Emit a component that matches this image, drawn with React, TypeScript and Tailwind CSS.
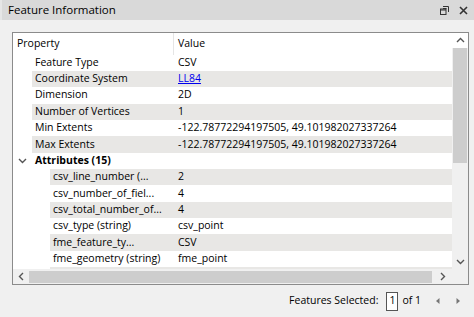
const top = [
  { k: "Feature Type", v: "CSV" },
  { k: "Coordinate System", v: "LL84", link: true },
  { k: "Dimension", v: "2D" },
  { k: "Number of Vertices", v: "1" },
  { k: "Min Extents", v: "-122.78772294197505, 49.101982027337264" },
  { k: "Max Extents", v: "-122.78772294197505, 49.101982027337264" },
];

const attrs = [
  { k: "csv_line_number (...", v: "2" },
  { k: "csv_number_of_fiel...", v: "4" },
  { k: "csv_total_number_of...", v: "4" },
  { k: "csv_type (string)", v: "csv_point" },
  { k: "fme_feature_ty...", v: "CSV" },
  { k: "fme_geometry (string)", v: "fme_point" },
  { k: "", v: "" },
];

type Item = { k: string; v: string; link?: boolean };

const Row = ({ item, indent, gray }: { item: Item; indent: number; gray: boolean }) => (
  <div className="flex h-[16.35px] shrink-0 items-center">
    <div style={{ width: indent }} className="h-full shrink-0" />
    <div className={`flex h-full flex-1 items-center ${gray ? "bg-[#e8e7e5]" : ""}`}>
      <div style={{ width: 161 - indent }} className="shrink-0 overflow-hidden whitespace-nowrap pl-[3px]">
        {item.k}
      </div>
      <div className="whitespace-nowrap pl-[4px]">
        {item.link ? <span className="text-[#0000ee] underline">{item.v}</span> : item.v}
      </div>
    </div>
  </div>
);

const Chevron = ({ d, className }: { d: string; className?: string }) => (
  <svg width="9" height="9" viewBox="0 0 9 9" className={className}>
    <path d={d} fill="none" stroke="#555" strokeWidth="1.4" />
  </svg>
);

export default function App() {
  return (
    <div className="relative flex h-[317px] w-[474px] flex-col overflow-hidden bg-[#f0f0f0] font-['Open_Sans',sans-serif] text-[10.5px] text-black">
      {/* Title bar */}
      <div className="flex h-[20px] shrink-0 items-center border-l-2 border-[#e6e6e6] bg-[#d9d9d9] pl-[6px] pr-[6px]">
        <span className="text-[11.5px]">Feature Information</span>
        <div className="ml-auto flex items-center gap-[10px]">
          <svg width="9" height="9" viewBox="0 0 9 9">
            <path d="M3 0.5h5.5v5.5M3 2.5h3.5v0" fill="none" stroke="#333" strokeWidth="1" />
            <rect x="0.5" y="3" width="5.5" height="5.5" fill="none" stroke="#333" strokeWidth="1" />
            <path d="M0.5 4h5.5" stroke="#333" strokeWidth="1" />
          </svg>
          <svg width="9" height="9" viewBox="0 0 9 9">
            <path d="M1 1l7 7M8 1l-7 7" stroke="#333" strokeWidth="1.6" />
          </svg>
        </div>
      </div>

      {/* Table */}
      <div className="ml-[12px] mr-[5px] mt-[12px] flex h-[253px] shrink-0 flex-col border border-[#8b8b8b] bg-white">
        <div className="flex min-h-0 flex-1">
          <div className="flex min-w-0 flex-1 flex-col overflow-hidden">
            <div className="flex h-[21.5px] shrink-0 items-center">
              <div className="h-full w-[161px] shrink-0 border-r border-[#e5e5e5] pl-[4px] leading-[21.5px]">Property</div>
              <div className="pl-[4px]">Value</div>
            </div>
            {top.map((it, i) => (
              <Row key={it.k} item={it} indent={19} gray={i % 2 === 1} />
            ))}
            <div className="flex h-[16.35px] shrink-0 items-center">
              <Chevron d="M1 3l3.5 3.5L8 3" className="ml-[5px] mr-[8px]" />
              <span className="font-bold">Attributes (15)</span>
            </div>
            {attrs.map((it, i) => (
              <Row key={i} item={it} indent={37} gray={i % 2 === 0} />
            ))}
          </div>
          {/* Vertical scrollbar */}
          <div className="flex w-[16px] shrink-0 flex-col items-center bg-[#f0f0f0]">
            <div className="flex h-[15px] w-full items-center justify-center bg-white">
              <Chevron d="M1 6l3.5-3.5L8 6" />
            </div>
            <div className="h-[115px] w-[14px] bg-[#cdcdcd]" />
            <div className="flex-1" />
            <div className="flex h-[16px] items-center justify-center">
              <Chevron d="M1 3l3.5 3.5L8 3" />
            </div>
          </div>
        </div>
        {/* Horizontal scrollbar */}
        <div className="flex h-[15px] shrink-0 items-center bg-[#f0f0f0]">
          <div className="flex w-[16px] justify-center">
            <Chevron d="M6 1L2.5 4.5 6 8" />
          </div>
          <div className="h-[12px] w-[403px] bg-[#cdcdcd]" />
          <div className="flex w-[20px] justify-center">
            <Chevron d="M3 1l3.5 3.5L3 8" />
          </div>
        </div>
      </div>

      {/* Footer */}
      <div className="flex flex-1 items-center justify-end pr-[13px] text-[10.5px]">
        <span>Features Selected:</span>
        <div className="ml-[8px] flex h-[19px] w-[12px] items-center justify-center border border-[#555] bg-white">
          1
        </div>
        <span className="ml-[4px]">of 1</span>
        <svg width="6" height="8" viewBox="0 0 6 8" className="ml-[14px]">
          <path d="M4.5 1v6L1 4z" fill="#777" />
        </svg>
        <svg width="6" height="8" viewBox="0 0 6 8" className="ml-[14px]">
          <path d="M1.5 1v6L5 4z" fill="#777" />
        </svg>
      </div>
    </div>
  );
}
